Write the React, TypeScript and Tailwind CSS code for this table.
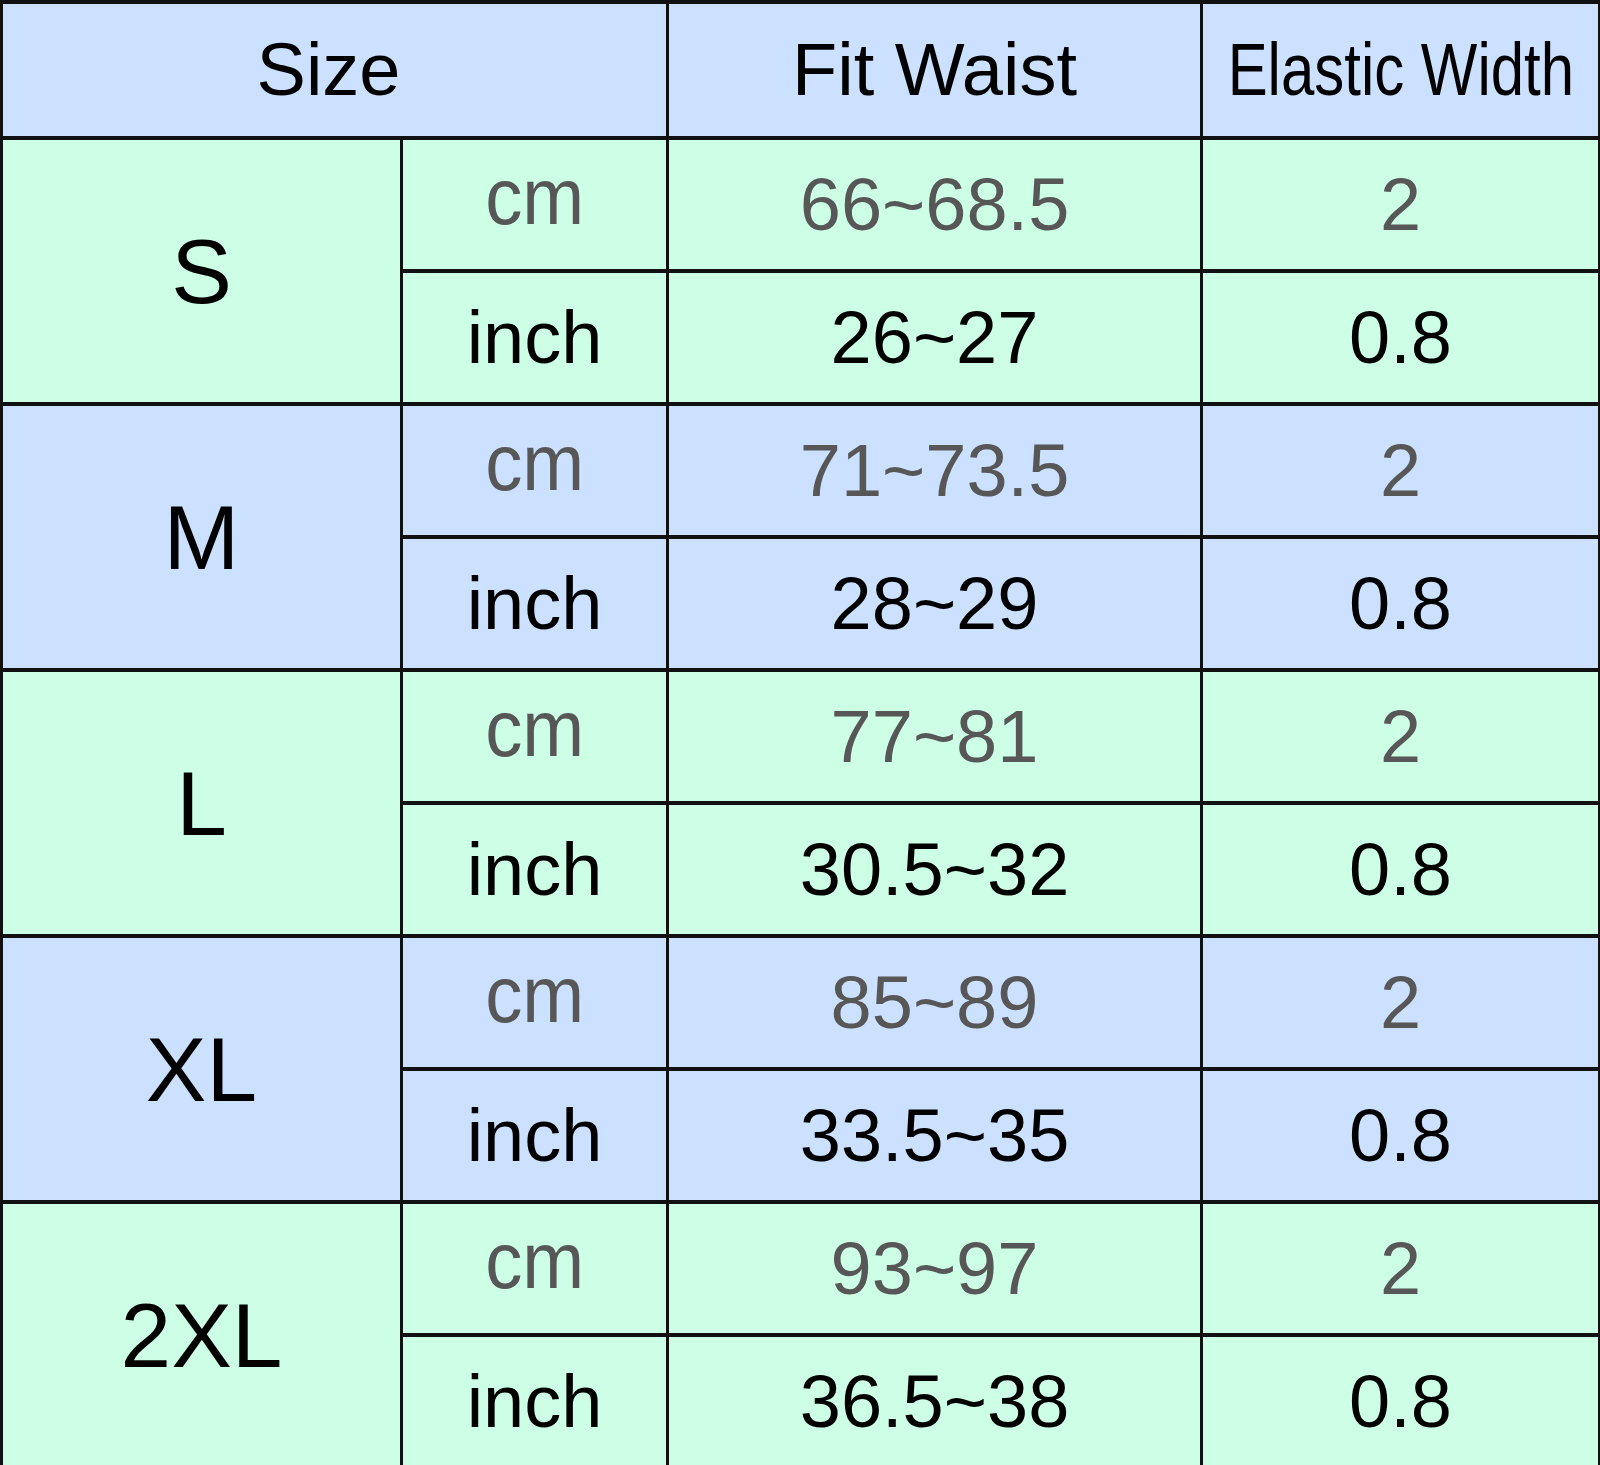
import React from 'react';

const rows = [
  { size: 'S', cm: '66~68.5', inch: '26~27', bg: 'bg-[#ccffe6]' },
  { size: 'M', cm: '71~73.5', inch: '28~29', bg: 'bg-[#cce0ff]' },
  { size: 'L', cm: '77~81', inch: '30.5~32', bg: 'bg-[#ccffe6]' },
  { size: 'XL', cm: '85~89', inch: '33.5~35', bg: 'bg-[#cce0ff]' },
  { size: '2XL', cm: '93~97', inch: '36.5~38', bg: 'bg-[#ccffe6]' },
];

const cell = 'border-x-[3px] border-y-[4px] border-[#111] text-center align-middle p-0';

export default function App() {
  return (
    <div className="w-[1600px] h-[1465px] overflow-hidden bg-white font-['Liberation_Sans',Arial,sans-serif]">
      <table className="w-[1598px] table-fixed border-collapse">
        <colgroup>
          <col className="w-[400px]" />
          <col className="w-[266px]" />
          <col className="w-[534px]" />
          <col className="w-[398px]" />
        </colgroup>
        <thead>
          <tr className="h-[136px] bg-[#cce0ff] text-[74px] leading-none text-black">
            <th colSpan={2} className={`${cell} font-normal`}>
              <span className="relative -left-[6px]">Size</span>
            </th>
            <th className={`${cell} font-normal`}>Fit Waist</th>
            <th className={`${cell} font-normal`}>
              <div className="flex justify-center">
                <span className="inline-block shrink-0 scale-x-[0.81] whitespace-nowrap">Elastic Width</span>
              </div>
            </th>
          </tr>
        </thead>
        <tbody>
          {rows.map((r) => (
            <React.Fragment key={r.size}>
              <tr className={`h-[133px] ${r.bg}`}>
                <td rowSpan={2} className={`${cell} text-[91px] leading-none text-black`}>
                  {r.size}
                </td>
                <td className={`${cell} text-[79px] leading-none text-[#575757]`}>
                  <span className="relative -top-[8px] inline-block scale-x-[0.94]">cm</span>
                </td>
                <td className={`${cell} text-[74px] leading-none text-[#575757]`}>{r.cm}</td>
                <td className={`${cell} text-[74px] leading-none text-[#575757]`}>2</td>
              </tr>
              <tr className={`h-[133px] ${r.bg}`}>
                <td className={`${cell} text-[74px] leading-none text-black`}>inch</td>
                <td className={`${cell} text-[74px] leading-none text-black`}>{r.inch}</td>
                <td className={`${cell} text-[74px] leading-none text-black`}>0.8</td>
              </tr>
            </React.Fragment>
          ))}
        </tbody>
      </table>
    </div>
  );
}
